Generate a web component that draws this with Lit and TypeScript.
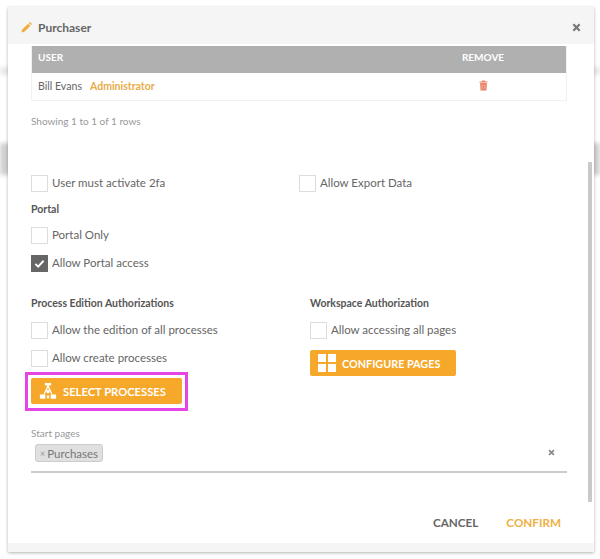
import { LitElement, html, css } from "lit";
import { customElement } from "lit/decorators.js";

const box = (checked = false) => html`<span class="cb ${checked ? "on" : ""}">${checked
  ? html`<svg viewBox="0 0 16 16" width="11" height="11"><path d="M2 8.5l4 4 8-8.5" fill="none" stroke="#fff" stroke-width="2.8"/></svg>`
  : ""}</span>`;

const check = (label: string, checked = false) =>
  html`<label class="check">${box(checked)}<span class="txt">${label}</span></label>`;

@customElement("app-root")
export class AppRoot extends LitElement {
  static styles = css`
    :host {
      display: block;
      position: relative;
      width: 600px;
      height: 559px;
      overflow: hidden;
      background: #fff;
      font-family: "Lato", "Open Sans", sans-serif;
      color: #666;
      font-size: 11.5px;
    }
    .band {
      position: absolute;
      left: 0;
      right: 0;
      top: 143px;
      height: 32px;
      background: #d0d0d0;
      filter: blur(2px);
    }
    .band.faint {
      top: 67px;
      height: 8px;
      background: #e8e8e8;
    }
    .wrap {
      position: relative;
      padding: 7px 6px 7px 8px;
      height: 100%;
      box-sizing: border-box;
    }
    .modal {
      position: relative;
      height: 545px;
      background: #fff;
      box-shadow: 0 1px 3px rgba(0, 0, 0, 0.3);
      display: flex;
      flex-direction: column;
    }
    .head {
      height: 37px;
      box-sizing: border-box;
      padding: 3px 13px 0;
      flex: none;
      background: #f5f5f5;
      display: flex;
      align-items: center;
      gap: 6px;
      font-size: 12px;
      font-weight: 700;
      color: #666;
    }
    .head .x {
      margin-left: auto;
      display: flex;
    }
    .body {
      flex: 1;
      padding: 2px 28px 0 23px;
      display: flex;
      flex-direction: column;
      min-height: 0;
    }
    .table {
      border: 1px solid #f0f0f0;
      border-top: 0;
      margin-right: -1px;
    }
    .thead {
      height: 27px;
      box-sizing: border-box;
      background: #b0b0b0;
      color: #fff;
      font-weight: 700;
      font-size: 10px;
      display: flex;
      align-items: center;
      padding: 0 6px 5px;
    }
    .trow {
      height: 27px;
      box-sizing: border-box;
      display: flex;
      align-items: center;
      padding: 0 6px 2px;
      font-size: 10.6px;
    }
    .spread {
      flex: 1;
    }
    .role {
      color: #e8ac48;
      font-weight: 700;
      margin-left: 8px;
      font-size: 10.5px;
    }
    .rm {
      width: 60px;
      display: flex;
      justify-content: center;
      margin-right: 47px;
    }
    .showing {
      margin-top: 13px;
      height: 14px;
      line-height: 14px;
      font-size: 10px;
      color: #999;
    }
    .two {
      display: grid;
      grid-template-columns: 268px 1fr;
    }
    .two.auth {
      grid-template-columns: 279px 1fr;
      margin-top: 24px;
    }
    .two.first {
      margin-top: 47px;
    }
    .check {
      display: flex;
      align-items: center;
      gap: 4px;
      height: 17px;
      font-size: 11.5px;
      color: #666;
    }
    .txt {
      margin-bottom: 2px;
    }
    .cb {
      width: 15px;
      height: 15px;
      border: 1px solid #ddd;
      display: inline-flex;
      align-items: center;
      justify-content: center;
      flex: none;
    }
    .cb.on {
      background: #666;
      border-color: #666;
    }
    h4 {
      margin: 0;
      font-size: 10.5px;
      font-weight: 700;
      color: #555;
      height: 14px;
      line-height: 14px;
    }
    .portal-head {
      margin-top: 10px;
    }
    .portal {
      margin-top: 11px;
      display: flex;
      flex-direction: column;
      gap: 11px;
    }
    .stack {
      display: flex;
      flex-direction: column;
      gap: 11px;
      margin-top: 12px;
    }
    .col {
      display: flex;
      flex-direction: column;
    }
    .btn {
      display: inline-flex;
      align-items: center;
      gap: 6px;
      box-sizing: border-box;
      height: 26px;
      background: #f5a82a;
      color: #fff;
      font-weight: 700;
      border-radius: 2px;
      padding: 0 8px;
      white-space: nowrap;
      font-size: 10.8px;
    }
    .btn.cfg {
      width: 146px;
      margin-top: 11px;
    }
    .btn.sel {
      width: 151px;
      font-size: 11.2px;
    }
    .hl {
      align-self: flex-start;
      margin: 5px 0 0 -6px;
      padding: 3px 3px 4px;
      border: 3px solid #e545e5;
    }
    .label {
      margin-top: 16px;
      font-size: 10px;
      color: #999;
      height: 12px;
      line-height: 12px;
    }
    .select {
      margin-top: 3px;
      height: 31px;
      box-sizing: border-box;
      border-bottom: 2px solid #ccc;
      margin-right: -1px;
      display: flex;
      align-items: flex-start;
      padding: 2px 12px 0 4px;
    }
    .chip {
      height: 18px;
      box-sizing: border-box;
      width: 68px;
      background: #e0e0e0;
      border: 1px solid #ccc;
      border-radius: 3px;
      display: flex;
      align-items: center;
      padding-left: 4px;
      gap: 2px;
      font-size: 11.5px;
      color: #777;
    }
    .chip i {
      font-style: normal;
      font-size: 9px;
      color: #999;
    }
    .clear {
      margin-left: auto;
      margin-top: 5px;
      display: flex;
    }
    .foot {
      position: absolute;
      right: 33px;
      bottom: 23px;
      display: flex;
      gap: 28px;
      font-size: 11.7px;
      font-weight: 700;
      color: #666;
    }
    .foot .ok {
      color: #eeb145;
    }
    .band-bottom {
      height: 9px;
      background: #f5f5f5;
      flex: none;
      margin-top: auto;
    }
    .scroll {
      position: absolute;
      right: 2px;
      top: 155px;
      width: 4px;
      height: 340px;
      background: #c9c9c9;
    }
  `;

  private x(size: number, color: string) {
    return html`<svg viewBox="0 0 10 10" width=${size} height=${size}><path d="M1.500 1.500l7 7M8.500 1.500l-7 7" stroke=${color} stroke-width="2.400" fill="none"/></svg>`;
  }

  render() {
    return html`
      <div class="band faint"></div>
      <div class="band"></div>
      <div class="wrap">
        <div class="modal">
          <div class="head">
            <svg viewBox="0 0 12 12" width="11" height="11"><path d="M0.500 11.500l.8-3.200 6.400-6.400 2.400 2.400-6.400 6.400zM8.400 1.200l.8-.7a1 1 0 0 1 1.200 0l1.100 1.100a1 1 0 0 1 0 1.200l-.7.8z" fill="#f0ad3c"/></svg>
            <span>Purchaser</span>
            <span class="x">${this.x(9, "#777")}</span>
          </div>
          <div class="body">
            <div class="table">
              <div class="thead"><span class="spread">USER</span><span class="rm">REMOVE</span></div>
              <div class="trow">
                <span>Bill Evans</span><span class="role">Administrator</span><span class="spread"></span>
                <span class="rm">
                  <svg viewBox="0 0 10 12" width="9" height="11">
                    <path d="M3.500 0.500h3l.5 1h2.500v1.200H.5V1.500H3zM1.200 3.300h7.600l-.5 8.200H1.700z" fill="#e8866c"/>
                    <path d="M3.500 5v5M6.500 5v5" stroke="#f5c0b0" stroke-width=".8"/>
                  </svg>
                </span>
              </div>
            </div>
            <div class="showing">Showing 1 to 1 of 1 rows</div>

            <div class="two first">
              ${check("User must activate 2fa")}
              ${check("Allow Export Data")}
            </div>
            <h4 class="portal-head">Portal</h4>
            <div class="portal">
              ${check("Portal Only")}
              ${check("Allow Portal access", true)}
            </div>

            <div class="two auth">
              <div class="col">
                <h4>Process Edition Authorizations</h4>
                <div class="stack">
                  ${check("Allow the edition of all processes")}
                  ${check("Allow create processes")}
                </div>
                <div class="hl">
                  <div class="btn sel">
                    <svg viewBox="0 0 20 20" width="18" height="18" fill="#fff">
                      <path d="M6.500 1h7v3h-7zM9.400 4h1.200l4.600 10h-1.400L10 6.500 6.200 14H4.800z"/>
                      <circle cx="10" cy="10.500" r="2"/>
                      <path d="M1 14h6v4.500H1zM13 14h6v4.500h-6zM8.700 15h2.600v3h-2.600z"/>
                    </svg>
                    <span>SELECT PROCESSES</span>
                  </div>
                </div>
              </div>
              <div class="col">
                <h4>Workspace Authorization</h4>
                <div class="stack">
                  ${check("Allow accessing all pages")}
                </div>
                <div class="btn cfg">
                  <svg viewBox="0 0 18 18" width="18" height="18" fill="#fff">
                    <rect x="0" y="0" width="8" height="8"/><rect x="10" y="0" width="8" height="8"/>
                    <rect x="0" y="10" width="8" height="8"/><rect x="10" y="10" width="8" height="8"/>
                  </svg>
                  <span>CONFIGURE PAGES</span>
                </div>
              </div>
            </div>

            <div class="label">Start pages</div>
            <div class="select">
              <div class="chip"><i>×</i><span>Purchases</span></div>
              <span class="clear">${this.x(7, "#888")}</span>
            </div>
          </div>
          <div class="foot"><span>CANCEL</span><span class="ok">CONFIRM</span></div>
          <div class="band-bottom"></div>
          <div class="scroll"></div>
        </div>
      </div>
    `;
  }
}
